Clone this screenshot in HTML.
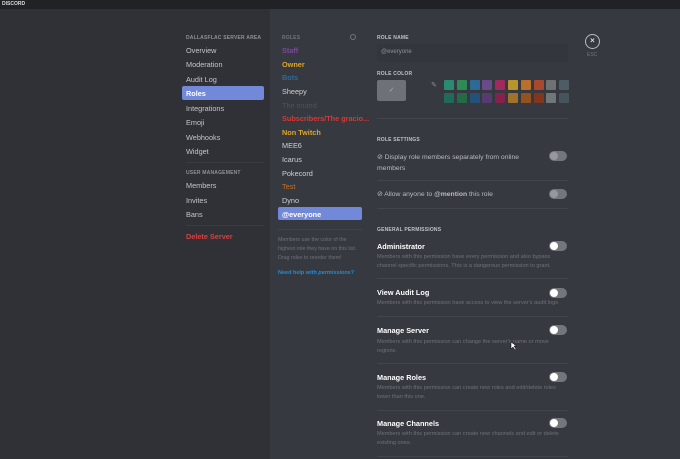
<!DOCTYPE html><html><head><style>
*{margin:0;padding:0;box-sizing:border-box}
body{width:680px;height:459px;overflow:hidden;background:#36393f;font-family:"Liberation Sans",sans-serif;position:relative;color:#dcddde}
.a{position:absolute;white-space:nowrap}
.top{left:0;top:0;width:680px;height:9px;background:#202225}
.side{left:0;top:9px;width:270px;height:450px;background:#2f3136}
.h{font-size:5px;font-weight:bold;color:#8e9297;letter-spacing:.2px}
.n{font-size:7.3px;color:#c4c6c9}
.r{font-size:7.3px;font-weight:bold}
.d{font-size:5.6px;color:#6f7278;line-height:9px}
.t{font-size:7.3px;font-weight:bold;color:#fff}
.hr{height:1px;background:#42454b}
.tg{width:18px;height:10px;border-radius:5px;background:#72767d}
.tg:after{content:"";position:absolute;left:1px;top:1px;width:8px;height:8px;border-radius:50%;background:#fff}
.tg.off:after{background:#96989d;left:1px}
.sw{width:10px;height:10px;border-radius:1px}
</style></head><body>
<div class="a top"></div>
<div class="a" style="left:2px;top:1px;font-size:5px;font-weight:bold;color:#ddd">DISCORD</div>
<div class="a side"></div>
<div class="a h" style="left:186px;top:35px">DALLASFLAC SERVER AREA</div>
<div class="a n" style="left:186px;top:46px">Overview</div>
<div class="a n" style="left:186px;top:60px">Moderation</div>
<div class="a n" style="left:186px;top:75px">Audit Log</div>
<div class="a" style="left:182px;top:86px;width:82px;height:14px;background:#7289da;border-radius:2px"></div>
<div class="a n" style="left:186px;top:89px;color:#fff;font-weight:bold">Roles</div>
<div class="a n" style="left:186px;top:104px">Integrations</div>
<div class="a n" style="left:186px;top:118px">Emoji</div>
<div class="a n" style="left:186px;top:133px">Webhooks</div>
<div class="a n" style="left:186px;top:147px">Widget</div>
<div class="a hr" style="left:186px;top:162px;width:78px;background:#3a3c42"></div>
<div class="a h" style="left:186px;top:170px">USER MANAGEMENT</div>
<div class="a n" style="left:186px;top:181px">Members</div>
<div class="a n" style="left:186px;top:196px">Invites</div>
<div class="a n" style="left:186px;top:210px">Bans</div>
<div class="a hr" style="left:186px;top:225px;width:78px;background:#3a3c42"></div>
<div class="a n" style="left:186px;top:232px;color:#d84040;font-weight:bold">Delete Server</div>

<div class="a h" style="left:282px;top:35px;color:#72767d">ROLES</div>
<div class="a" style="left:350px;top:34px;width:6px;height:6px;border:1px solid #72767d;border-radius:50%"></div>
<div class="a r" style="left:282px;top:46px;color:#7a4a9a">Staff</div>
<div class="a r" style="left:282px;top:60px;color:#e0a526">Owner</div>
<div class="a r" style="left:282px;top:73px;color:#2d6a9a">Bots</div>
<div class="a r" style="left:282px;top:87px;color:#cfd0d2;font-weight:normal">Sheepy</div>
<div class="a r" style="left:282px;top:101px;color:#4e535a;font-weight:normal">The muted</div>
<div class="a r" style="left:282px;top:114px;color:#d43a3a">Subscribers/The gracio...</div>
<div class="a r" style="left:282px;top:128px;color:#e0a526">Non Twitch</div>
<div class="a r" style="left:282px;top:141px;color:#cfd0d2;font-weight:normal">MEE6</div>
<div class="a r" style="left:282px;top:155px;color:#cfd0d2;font-weight:normal">Icarus</div>
<div class="a r" style="left:282px;top:169px;color:#cfd0d2;font-weight:normal">Pokecord</div>
<div class="a r" style="left:282px;top:182px;color:#c4722a;font-weight:normal">Test</div>
<div class="a r" style="left:282px;top:196px;color:#cfd0d2;font-weight:normal">Dyno</div>
<div class="a" style="left:278px;top:207px;width:84px;height:13px;background:#7289da;border-radius:2px"></div>
<div class="a r" style="left:282px;top:210px;color:#fff">@everyone</div>
<div class="a hr" style="left:278px;top:229px;width:84px;background:#3f4248"></div>
<div class="a d" style="left:278px;top:236px;font-size:5.3px">Members use the color of the<br>highest role they have on this list.<br>Drag roles to reorder them!</div>
<div class="a" style="left:278px;top:270px;font-size:5.5px;font-weight:bold;color:#1e8fd8">Need help with <i>permissions</i>?</div>

<div class="a h" style="left:377px;top:35px;color:#c0c2c6">ROLE NAME</div>
<div class="a" style="left:377px;top:44px;width:191px;height:18px;background:#33363c;border-radius:2px"></div>
<div class="a" style="left:381px;top:49px;font-size:6px;color:#8e9297">@everyone</div>
<div class="a" style="left:585px;top:34px;width:15px;height:15px;border:1.5px solid #b9bbbe;border-radius:50%;font-size:8px;text-align:center;line-height:12px;color:#ddd;font-weight:bold">×</div>
<div class="a" style="left:587px;top:52px;font-size:5px;color:#72767d">ESC</div>
<div class="a h" style="left:377px;top:71px;color:#c0c2c6">ROLE COLOR</div>
<div class="a" style="left:377px;top:80px;width:29px;height:21px;background:#6e7278;border-radius:2px;color:#a8abaf;font-size:7px;text-align:center;line-height:21px">✓</div>
<div class="a" style="left:431px;top:81px;font-size:7px;color:#8e9297">✎</div>
<div class="a hr" style="left:377px;top:118px;width:191px"></div>
<div class="a h" style="left:377px;top:137px;color:#c0c2c6">ROLE SETTINGS</div>
<div class="a" style="left:377px;top:152px;font-size:6.8px;color:#b9bbbe;line-height:11px">⊘ Display role members separately from online<br>members</div>
<div class="a tg off" style="left:549px;top:151px"></div>
<div class="a hr" style="left:377px;top:180px;width:191px"></div>
<div class="a" style="left:377px;top:190px;font-size:6.8px;color:#b9bbbe">⊘ Allow anyone to <b>@mention</b> this role</div>
<div class="a tg off" style="left:549px;top:189px"></div>
<div class="a hr" style="left:377px;top:208px;width:191px"></div>
<div class="a h" style="left:377px;top:227px;color:#c0c2c6">GENERAL PERMISSIONS</div>

<div class="a t" style="left:377px;top:242px">Administrator</div>
<div class="a tg" style="left:549px;top:241px"></div>
<div class="a d" style="left:377px;top:253px">Members with this permission have every permission and also bypass<br>channel specific permissions. This is a dangerous permission to grant.</div>
<div class="a hr" style="left:377px;top:278px;width:191px"></div>
<div class="a t" style="left:377px;top:288px">View Audit Log</div>
<div class="a tg" style="left:549px;top:288px"></div>
<div class="a d" style="left:377px;top:299px">Members with this permission have access to view the server's audit logs</div>
<div class="a hr" style="left:377px;top:316px;width:191px"></div>
<div class="a t" style="left:377px;top:326px">Manage Server</div>
<div class="a tg" style="left:549px;top:325px"></div>
<div class="a d" style="left:377px;top:338px">Members with this permission can change the server's name or move<br>regions.</div>
<div class="a hr" style="left:377px;top:363px;width:191px"></div>
<div class="a t" style="left:377px;top:373px">Manage Roles</div>
<div class="a tg" style="left:549px;top:372px"></div>
<div class="a d" style="left:377px;top:384px">Members with this permission can create new roles and edit/delete roles<br>lower than this one.</div>
<div class="a hr" style="left:377px;top:410px;width:191px"></div>
<div class="a t" style="left:377px;top:419px">Manage Channels</div>
<div class="a tg" style="left:549px;top:418px"></div>
<div class="a d" style="left:377px;top:430px">Members with this permission can create new channels and edit or delete<br>existing ones.</div>
<div class="a hr" style="left:377px;top:456px;width:191px"></div>
<svg class="a" style="left:510px;top:341px" width="7" height="10"><path d="M1 1 L1 8 L3 6 L5 9 L6 8 L4 5 L6.5 5 Z" fill="#fff" stroke="#000" stroke-width=".5"/></svg>
<div class="a" style="left:444px;top:80px;display:grid;grid-template-columns:repeat(10,10px);gap:3px 2.8px">
<div class="sw" style="background:#2a8a72"></div><div class="sw" style="background:#2e8a57"></div><div class="sw" style="background:#2d6a98"></div><div class="sw" style="background:#6b4a8a"></div><div class="sw" style="background:#a02a5e"></div><div class="sw" style="background:#b8952a"></div><div class="sw" style="background:#b8702a"></div><div class="sw" style="background:#a8482e"></div><div class="sw" style="background:#6e7274"></div><div class="sw" style="background:#4e5c66"></div>
<div class="sw" style="background:#1f6a58"></div><div class="sw" style="background:#236a45"></div><div class="sw" style="background:#22527a"></div><div class="sw" style="background:#573a72"></div><div class="sw" style="background:#84224c"></div><div class="sw" style="background:#a0722a"></div><div class="sw" style="background:#94521e"></div><div class="sw" style="background:#82361f"></div><div class="sw" style="background:#70767a"></div><div class="sw" style="background:#48545c"></div>
</div>
</body></html>
